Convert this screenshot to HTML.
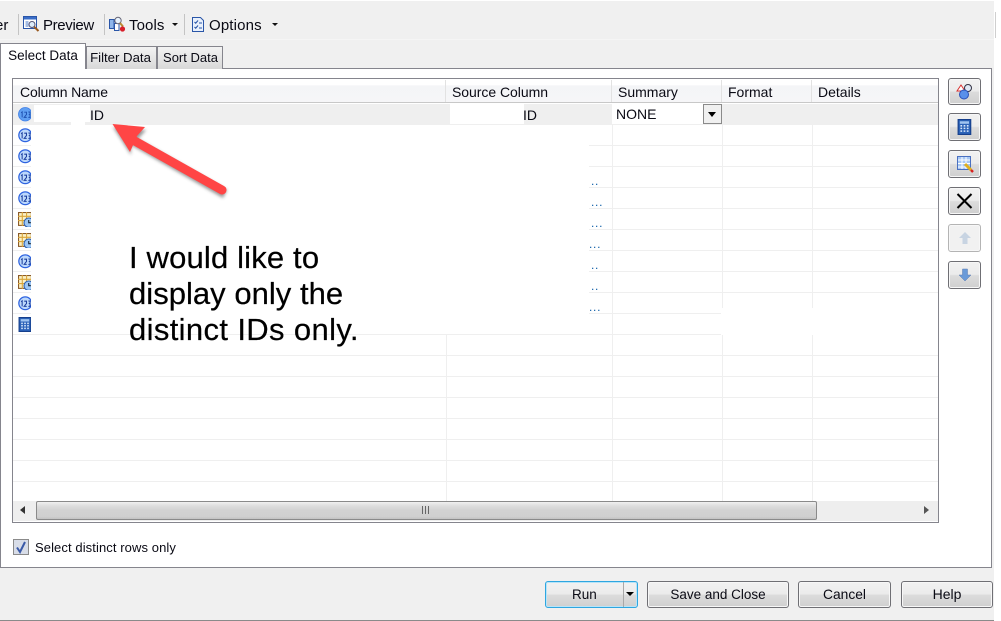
<!DOCTYPE html>
<html><head><meta charset="utf-8"><style>
html,body{margin:0;padding:0;width:1001px;height:621px;overflow:hidden;background:#fff}
body{position:relative;font-family:"Liberation Sans",sans-serif;color:#0a0a14;font-size:14px}
.a{position:absolute}
.t{position:absolute;white-space:nowrap;line-height:16px}
.btn{position:absolute;box-sizing:border-box;border:1px solid #6f6f74;border-radius:3px;background:linear-gradient(#f2f2f2 0,#ebebeb 48%,#dcdcdc 52%,#cfcfcf 100%);box-shadow:inset 0 0 0 1px #f7f7f7;text-align:center;line-height:24px;font-size:14px}
.h{position:absolute;height:1px;background:#efefef;left:13px;width:925px}
.v{position:absolute;width:1px;background:#efefef}
.tab{position:absolute;box-sizing:border-box;border:1px solid #85858d;border-bottom:none;background:linear-gradient(#f3f3f3,#d8d8d8);text-align:center;font-size:13.2px;line-height:21px}
.i{position:absolute;left:18px;width:13px;height:15px}
.d{position:absolute;color:#0f5fa8;font-size:12px;line-height:12px;white-space:nowrap;letter-spacing:.7px}
</style></head><body>
<svg width="0" height="0" style="position:absolute"><defs>
<symbol id="n" viewBox="0 0 14 14"><circle cx="7" cy="7" r="6.2" fill="#bcd8fb" stroke="#2d63e0" stroke-width="1.200"/><path d="M3 5.500l1-.8V10M6 5h2.200v2.200L6 10h2.400M10 4.800h1.600v2.400h-1.200M11.600 7.200V10H10" fill="none" stroke="#1c3f9e" stroke-width="1"/></symbol>
<symbol id="m" viewBox="0 0 14 14"><circle cx="7" cy="7" r="6.500" fill="#5f9ff2" stroke="#3f7fe8" stroke-width=".8"/><path d="M3 5.500l1-.8V10M6 5h2.200v2.200L6 10h2.400M10 4.800h1.600v2.400h-1.200M11.600 7.200V10H10" fill="none" stroke="#1c4fb0" stroke-width=".9"/></symbol>
<symbol id="c" viewBox="0 0 14 14"><rect x=".5" y=".5" width="12" height="12" fill="#fbf0c4" stroke="#8a5a2a"/><path d="M0 4h13M4 0v13M8 0v13M0 8h13" stroke="#d9a53a"/><circle cx="10" cy="10" r="4.400" fill="#9cc6f4" stroke="#2b5fb0"/><path d="M10 7.500V10h2" stroke="#123" fill="none"/></symbol>
<symbol id="k" viewBox="0 0 14 14"><rect x="1" y=".5" width="11" height="13" fill="#2c63b8" stroke="#163f8c"/><rect x="2.500" y="2" width="8" height="2.200" fill="#9fc4f0"/><path d="M3 6h1.500M5.800 6h1.500M8.600 6h1.500M3 8.200h1.500M5.800 8.200h1.500M8.600 8.200h1.500M3 10.600h1.500M5.800 10.600h1.500M8.600 10.600h1.500" stroke="#d8e8fa" stroke-width="1.400"/></symbol>
</defs></svg>

<!-- window background -->
<div class="a" style="left:0;top:1px;width:994px;height:619px;background:#f0f0f0"></div>
<div class="a" style="left:0;top:620px;width:994px;height:1px;background:#8a8a8a"></div>
<div class="a" style="left:0;top:39px;width:994px;height:1px;background:#f5f5f5"></div>
<div class="a" style="left:995px;top:12px;width:1px;height:26px;background:#cfcfcf"></div>

<!-- toolbar -->
<div class="t" style="left:-5px;top:18px;font-size:15px">er</div>
<div class="a" style="left:18px;top:14px;width:1px;height:21px;background:#c4c4c4"></div>
<svg class="a" style="left:23px;top:16px" width="17" height="17" viewBox="0 0 17 17"><rect x=".5" y=".5" width="13" height="12" fill="#fff" stroke="#2a56a8"/><rect x="1" y="1" width="12" height="2.500" fill="#3a6ec8"/><path d="M2.500 6h3M2.500 8h3M2.500 10h3" stroke="#4a7ac8"/><circle cx="9" cy="8.500" r="3" fill="#dcecfa" stroke="#557"/><path d="M11.200 10.800L15.500 15" stroke="#9a5a20" stroke-width="2"/></svg>
<div class="t" style="left:43px;top:18px;font-size:15px;letter-spacing:-.35px">Preview</div>
<div class="a" style="left:104px;top:14px;width:1px;height:21px;background:#c4c4c4"></div>
<svg class="a" style="left:109px;top:16px" width="17" height="17" viewBox="0 0 17 17"><rect x=".5" y="3.500" width="4.500" height="9" fill="#8fb6ea" stroke="#2a56a8"/><rect x="5.500" y="7.500" width="4.500" height="7" fill="#fff" stroke="#2a56a8"/><circle cx="9" cy="4.500" r="3.200" fill="#e8f2fc" stroke="#667"/><path d="M11 7l3 3.500" stroke="#b88a30" stroke-width="2"/><circle cx="13.500" cy="13" r="2.600" fill="#d81e2a"/></svg>
<div class="t" style="left:129px;top:18px;font-size:15px;letter-spacing:.1px">Tools</div>
<div class="a" style="left:172px;top:23px;border:3px solid transparent;border-top:3px solid #111;border-bottom:0"></div>
<div class="a" style="left:184px;top:14px;width:1px;height:21px;background:#c4c4c4"></div>
<svg class="a" style="left:191px;top:17px" width="14" height="16" viewBox="0 0 14 16"><path d="M1.500.5h8l3 3v11h-11z" fill="#e8f0fc" stroke="#2a56a8"/><path d="M3.500 5l1.200 1.200L7 3.500M3.500 10l1.200 1.200L7 8.500" fill="none" stroke="#2a56a8" stroke-width="1.100"/><path d="M8 6h3M8 11h3" stroke="#2a56a8"/></svg>
<div class="t" style="left:209px;top:18px;font-size:15px;letter-spacing:.15px">Options</div>
<div class="a" style="left:272px;top:23px;border:3px solid transparent;border-top:3px solid #111;border-bottom:0"></div>

<!-- panel -->
<div class="a" style="left:0;top:68px;width:992px;height:500px;box-sizing:border-box;background:#fff;border:1px solid #85858d"></div>

<!-- tabs -->
<div class="tab" style="left:86px;top:46px;width:71px;height:23px;padding-right:2px">Filter Data</div>
<div class="tab" style="left:157px;top:46px;width:66px;height:23px;font-size:13px;padding-left:1px">Sort Data</div>
<div class="tab" style="left:0;top:43px;width:86px;height:26px;background:#fff;line-height:23px;z-index:2;font-size:13.500px">Select Data</div>

<!-- grid -->
<div class="a" style="left:12px;top:78px;width:927px;height:445px;box-sizing:border-box;background:#fff;border:1px solid #85858d"></div>
<div class="a" style="left:13px;top:79px;width:925px;height:23px;background:linear-gradient(#fff 0,#fff 25%,#f4f5f7 30%,#f6f6f8 100%)"></div>
<div class="a" style="left:13px;top:102px;width:925px;height:1px;background:#c8c8c8"></div>
<div class="a" style="left:445px;top:80px;width:1px;height:22px;background:#e2e2e2"></div>
<div class="a" style="left:611px;top:80px;width:1px;height:22px;background:#e2e2e2"></div>
<div class="a" style="left:721px;top:80px;width:1px;height:22px;background:#e2e2e2"></div>
<div class="a" style="left:811px;top:80px;width:1px;height:22px;background:#e2e2e2"></div>
<div class="t" style="left:20px;top:84px;letter-spacing:-.15px">Column Name</div>
<div class="t" style="left:452px;top:84px;letter-spacing:-.04px">Source Column</div>
<div class="t" style="left:618px;top:84px">Summary</div>
<div class="t" style="left:728px;top:84px">Format</div>
<div class="t" style="left:818px;top:84px">Details</div>

<!-- row 1 -->
<div class="a" style="left:13px;top:104px;width:925px;height:21px;background:#efefef"></div>
<div class="a" style="left:34px;top:105px;width:56px;height:17px;background:#fff"></div>
<div class="a" style="left:71px;top:120px;width:14px;height:5px;background:#fff"></div>
<div class="t" style="left:90px;top:107px">ID</div>
<div class="a" style="left:450px;top:104px;width:74px;height:20px;background:#fff"></div>
<div class="t" style="left:523px;top:107px">ID</div>
<div class="a" style="left:612px;top:104px;width:110px;height:20px;background:#fff"></div>
<div class="t" style="left:616px;top:106px">NONE</div>
<div class="a" style="left:703px;top:104px;width:19px;height:20px;box-sizing:border-box;border:1px solid #8a8a8a;background:#f0f0f0"></div>
<div class="a" style="left:708px;top:112px;border:4px solid transparent;border-top:5px solid #000;border-bottom:0"></div>

<!-- row lines -->
<div class="h" style="top:145px"></div><div class="h" style="top:166px"></div><div class="h" style="top:187px"></div>
<div class="h" style="top:208px"></div><div class="h" style="top:229px"></div><div class="h" style="top:250px"></div>
<div class="h" style="top:271px"></div><div class="h" style="top:292px"></div><div class="h" style="top:313px"></div>
<div class="h" style="top:334px"></div><div class="h" style="top:355px"></div><div class="h" style="top:376px"></div>
<div class="h" style="top:397px"></div><div class="h" style="top:418px"></div><div class="h" style="top:439px"></div>
<div class="h" style="top:460px"></div><div class="h" style="top:481px"></div>
<div class="v" style="left:446px;top:125px;height:376px"></div>
<div class="v" style="left:612px;top:125px;height:376px"></div>
<div class="v" style="left:722px;top:125px;height:376px"></div>
<div class="v" style="left:812px;top:125px;height:376px"></div>

<!-- white redaction -->
<div class="a" style="left:31px;top:125px;width:558px;height:209px;background:#fff"></div>
<div class="a" style="left:721px;top:308px;width:217px;height:26px;background:#fff"></div>
<div class="a" style="left:721px;top:314px;width:217px;height:21px;background:#fff"></div>

<!-- row icons -->
<svg class="i" style="top:107px"><use href="#m" width="14.500" height="14.500"/></svg>
<svg class="i" style="top:128px"><use href="#n" width="14.500" height="14.500"/></svg>
<svg class="i" style="top:149px"><use href="#n" width="14.500" height="14.500"/></svg>
<svg class="i" style="top:170px"><use href="#n" width="14.500" height="14.500"/></svg>
<svg class="i" style="top:191px"><use href="#n" width="14.500" height="14.500"/></svg>
<svg class="i" style="top:212px"><use href="#c" width="15" height="15"/></svg>
<svg class="i" style="top:233px"><use href="#c" width="15" height="15"/></svg>
<svg class="i" style="top:254px"><use href="#n" width="14.500" height="14.500"/></svg>
<svg class="i" style="top:275px"><use href="#c" width="15" height="15"/></svg>
<svg class="i" style="top:296px"><use href="#n" width="14.500" height="14.500"/></svg>
<svg class="i" style="top:317px"><use href="#k" width="15" height="15"/></svg>

<!-- truncated dots -->
<div class="d" style="left:591px;top:175px">..</div>
<div class="d" style="left:591px;top:196px">...</div>
<div class="d" style="left:591px;top:217px">...</div>
<div class="d" style="left:589px;top:238px">...</div>
<div class="d" style="left:591px;top:259px">..</div>
<div class="d" style="left:591px;top:280px">..</div>
<div class="d" style="left:589px;top:301px">...</div>

<!-- annotation -->
<div class="t" style="left:129px;top:240px;font-size:31px;line-height:36px;color:#000;-webkit-text-stroke:.2px #000">
<div style="letter-spacing:.16px">I would like to</div>
<div style="letter-spacing:.03px">display only the</div>
<div style="letter-spacing:.36px">distinct IDs only.</div>
</div>
<svg class="a" style="left:100px;top:115px" width="140" height="95" viewBox="100 115 140 95">
<defs><filter id="s" x="-20%" y="-20%" width="140%" height="140%"><feGaussianBlur stdDeviation="1.600"/></filter></defs>
<g transform="translate(1,3)" opacity=".5" filter="url(#s)"><path d="M112 124L145 127L137 136L226 187L222 195L130 142L130 152Z" fill="#333"/></g>
<path d="M112.500 124L145 127L137 136L130 152Z" fill="#ff4545"/>
<path d="M133 140L222 190" stroke="#ff4545" stroke-width="9" stroke-linecap="round"/>
</svg>

<!-- scrollbar -->
<div class="a" style="left:13px;top:501px;width:925px;height:20px;background:#eee"></div>
<div class="a" style="left:20px;top:506px;border:4px solid transparent;border-right:5px solid #333;border-left:0"></div>
<div class="a" style="left:924px;top:506px;border:4px solid transparent;border-left:5px solid #555;border-right:0"></div>
<div class="a" style="left:36px;top:501px;width:781px;height:19px;box-sizing:border-box;border:1px solid #8a8a8a;border-radius:2px;background:linear-gradient(#f0f0f0 0,#dcdcdc 25%,#d2d2d2 50%,#d0d0d0 85%,#c2c2c2 100%)"></div>
<div class="a" style="left:422px;top:506px;width:8px;height:8px;background:repeating-linear-gradient(90deg,#666 0,#666 1px,transparent 1px,transparent 3px)"></div>

<!-- checkbox -->
<div class="a" style="left:13px;top:539px;width:16px;height:16px;box-sizing:border-box;border:1px solid #8a8a8a;background:#d8dde8"></div>
<svg class="a" style="left:13px;top:539px" width="16" height="16" viewBox="0 0 16 16"><path d="M4 8.500L7 13L12 3" fill="none" stroke="#3a5aa8" stroke-width="2"/></svg>
<div class="t" style="left:35px;top:540px;font-size:13px;letter-spacing:.09px">Select distinct rows only</div>

<!-- side buttons -->
<div class="btn" style="left:948px;top:78px;width:33px;height:27px"></div>
<svg class="a" style="left:956px;top:83px" width="17" height="17" viewBox="0 0 17 17"><path d="M1 8L5 2l4 6z" fill="#fff" stroke="#d83030"/><circle cx="12" cy="5" r="3.500" fill="#dfe8f5" stroke="#334"/><circle cx="8" cy="11.500" r="4.500" fill="#5a90ea" stroke="#2a50b8"/></svg>
<div class="btn" style="left:948px;top:113px;width:33px;height:28px"></div>
<svg class="a" style="left:957px;top:119px" width="16" height="16"><use href="#k"/></svg>
<div class="btn" style="left:948px;top:150px;width:33px;height:28px"></div>
<svg class="a" style="left:957px;top:156px" width="17" height="17" viewBox="0 0 17 17"><rect x=".5" y=".5" width="13" height="13" fill="#a8c8f4" stroke="#4a70c0"/><path d="M5 1v12M9 1v12M1 4h12M1 7.500h12M1 11h12" stroke="#fff"/><path d="M8 8l6 6" stroke="#e0b020" stroke-width="3"/><path d="M14 14l2 2" stroke="#d82020" stroke-width="2.500"/></svg>
<div class="btn" style="left:948px;top:187px;width:33px;height:28px"></div>
<svg class="a" style="left:956px;top:193px" width="17" height="16" viewBox="0 0 17 16"><path d="M1.500 1L15.500 15M15.500 1L1.500 15" stroke="#000" stroke-width="2"/></svg>
<div class="btn" style="left:948px;top:224px;width:33px;height:28px;background:#f1f1f1;border-color:#b4b4b4"></div>
<svg class="a" style="left:958px;top:231px" width="14" height="14" viewBox="0 0 14 14"><path d="M7 1L13 7H9.500V13H4.500V7H1Z" fill="#c8d4e2"/></svg>
<div class="btn" style="left:948px;top:261px;width:33px;height:28px"></div>
<svg class="a" style="left:958px;top:268px" width="14" height="14" viewBox="0 0 14 14"><path d="M7 13L13 7H9.500V1H4.500V7H1Z" fill="#6a9ad8" stroke="#5a7ab0" stroke-width=".5"/></svg>

<!-- bottom buttons -->
<div class="btn" style="left:545px;top:581px;width:93px;height:27px;border-color:#2ea6e0;box-shadow:inset 0 0 0 1px #b8e4f8;text-align:left;padding-left:26px;font-size:13.500px;line-height:25px">Run</div>
<div class="a" style="left:623px;top:582px;width:1px;height:25px;background:#a8a8a8"></div>
<div class="a" style="left:626px;top:592px;border:4px solid transparent;border-top:4px solid #000;border-bottom:0"></div>
<div class="btn" style="left:647px;top:581px;width:142px;height:27px;font-size:13.500px;line-height:25px">Save and Close</div>
<div class="btn" style="left:798px;top:581px;width:93px;height:27px;font-size:13.800px;line-height:25px">Cancel</div>
<div class="btn" style="left:901px;top:581px;width:92px;height:27px">Help</div>
</body></html>
